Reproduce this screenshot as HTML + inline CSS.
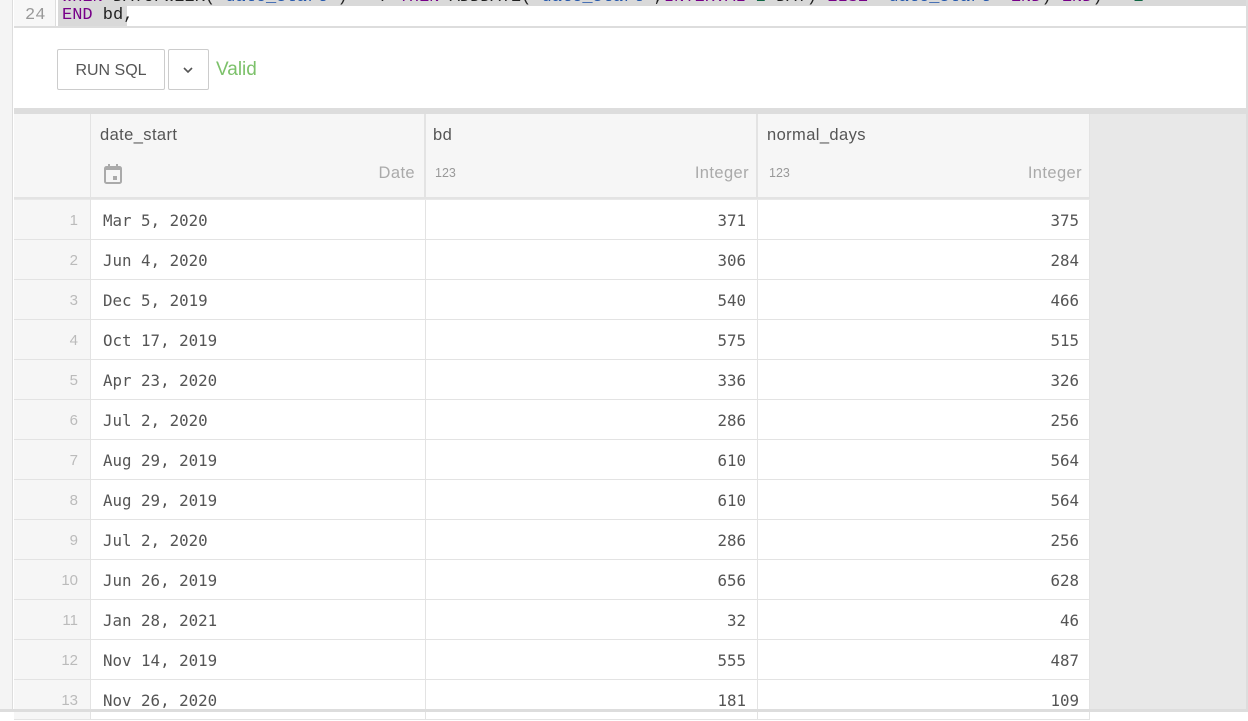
<!DOCTYPE html>
<html><head><style>
*{margin:0;padding:0;box-sizing:border-box}
body{width:1248px;height:712px;overflow:hidden;background:#fff;font-family:"Liberation Sans",sans-serif;position:relative}
.abs{position:absolute}
.mono{font-family:"Liberation Mono",monospace}
.dm{font-family:"DejaVu Sans Mono","Liberation Mono",monospace}
.hd{color:#555;font-size:16.5px;letter-spacing:0.4px}
.ty{color:#aaa;font-size:16.5px;letter-spacing:0.4px}
.cell{position:absolute;height:40px;border-bottom:1px solid #e3e3e3;border-right:1px solid #e3e3e3;background:#fff;font-size:15.8px;color:#555;line-height:41px}
</style></head><body>
<div class="abs" style="left:0;top:0;width:13px;height:712px;background:#f4f4f4;border-right:1px solid #ddd"></div>
<!-- editor -->
<div class="abs" style="left:14px;top:0;width:42px;height:27px;background:#f7f7f7;border-right:1px solid #ddd"></div>
<div class="abs" style="left:58px;top:0;width:1190px;height:6px;background:#d9d9d9"></div>
<div class="abs" style="left:58px;top:6px;width:69px;height:20px;background:#d9d9d9"></div>
<div class="abs mono" style="left:62px;top:-11px;font-size:17px;white-space:nowrap;line-height:18px;color:#222"><span style="color:#708">WHEN</span> DAYOFWEEK(<span style="color:#25a">'date_start'</span>) = 7 <span style="color:#708">THEN</span> ADDDATE(<span style="color:#25a">'date_start'</span>,<span style="color:#708">INTERVAL</span> <span style="color:#164">2</span> DAY) <span style="color:#708">ELSE</span> <span style="color:#25a">'date_start'</span> <span style="color:#708">END</span>) <span style="color:#708">END</span>) &nbsp; <span style="color:#164">1</span></div>
<div class="abs mono" style="left:25px;top:7px;font-size:17px;line-height:18px;color:#999">24</div>
<div class="abs mono" style="left:62px;top:7px;font-size:17px;line-height:18px;color:#222"><span style="color:#708">END</span> bd,</div>
<div class="abs" style="left:14px;top:26px;width:1234px;height:2px;background:#ddd"></div>
<!-- buttons -->
<div class="abs" style="left:57px;top:49px;width:108px;height:41px;border:1px solid #ccc;border-radius:2px;color:#555;font-size:16px;line-height:41px;text-align:center">RUN SQL</div>
<div class="abs" style="left:168px;top:49px;width:41px;height:41px;border:1px solid #ccc;border-radius:2px"></div>
<svg class="abs" style="left:182px;top:65px" width="12" height="10"><path d="M2 3l4 4 4-4" stroke="#555" stroke-width="1.6" fill="none"/></svg>
<div class="abs" style="left:216px;top:59px;color:#7cc16a;font-size:19px">Valid</div>
<div class="abs" style="left:14px;top:108px;width:1234px;height:6px;background:#ddd"></div>
<div class="abs" style="left:1246px;top:0;width:2px;height:712px;background:#ddd"></div>
<!-- table -->
<div class="abs" style="left:14px;top:114px;width:1232px;height:598px;background:#e8e8e8"></div>
<div class="abs" style="left:14px;top:114px;width:1076px;height:85px;background:#f6f6f6;border-bottom:2px solid #e3e3e3"></div>
<div class="abs" style="left:90px;top:114px;width:1px;height:598px;background:#e3e3e3"></div>
<div class="abs" style="left:424px;top:114px;width:2px;height:85px;background:#e3e3e3"></div>
<div class="abs" style="left:756px;top:114px;width:2px;height:85px;background:#e3e3e3"></div>
<div class="abs" style="left:1089px;top:114px;width:1px;height:85px;background:#e3e3e3"></div>
<div class="abs hd" style="left:100px;top:126px">date_start</div>
<div class="abs hd" style="left:433px;top:126px">bd</div>
<div class="abs hd" style="left:767px;top:126px">normal_days</div>
<svg class="abs" style="left:103px;top:163px" width="20" height="22"><rect x="2" y="4" width="16" height="16" rx="1.5" fill="none" stroke="#aaa" stroke-width="2"/><rect x="2" y="4" width="16" height="3" fill="#aaa"/><rect x="5" y="1" width="2" height="4" fill="#aaa"/><rect x="13" y="1" width="2" height="4" fill="#aaa"/><rect x="10" y="13" width="4" height="4" fill="#aaa"/></svg>
<div class="abs ty" style="right:833px;top:164px">Date</div>
<div class="abs ty" style="right:499px;top:164px">Integer</div>
<div class="abs ty" style="right:166px;top:164px">Integer</div>
<div class="abs" style="left:435px;top:166px;color:#999;font-size:12.5px">123</div>
<div class="abs" style="left:769px;top:166px;color:#999;font-size:12.5px">123</div>
<div id="rows"></div>
<script>
var d=[["Mar 5, 2020",371,375],["Jun 4, 2020",306,284],["Dec 5, 2019",540,466],["Oct 17, 2019",575,515],["Apr 23, 2020",336,326],["Jul 2, 2020",286,256],["Aug 29, 2019",610,564],["Aug 29, 2019",610,564],["Jul 2, 2020",286,256],["Jun 26, 2019",656,628],["Jan 28, 2021",32,46],["Nov 14, 2019",555,487],["Nov 26, 2020",181,109]];
var h="";d.forEach(function(r,i){var t=200+i*40;
h+='<div class="cell" style="left:14px;top:'+t+'px;width:77px;background:#f6f6f6;color:#bbb;text-align:right;padding-right:12px;font-size:15px">'+(i+1)+'</div>';
h+='<div class="cell dm" style="left:91px;top:'+t+'px;width:335px;padding-left:12px">'+r[0]+'</div>';
h+='<div class="cell dm" style="left:426px;top:'+t+'px;width:332px;text-align:right;padding-right:11px">'+r[1]+'</div>';
h+='<div class="cell dm" style="left:758px;top:'+t+'px;width:332px;text-align:right;padding-right:10px">'+r[2]+'</div>';});
document.getElementById("rows").innerHTML=h;
</script>
<div class="abs" style="left:0;top:709px;width:1248px;height:3px;background:#ddd"></div>
</body></html>
